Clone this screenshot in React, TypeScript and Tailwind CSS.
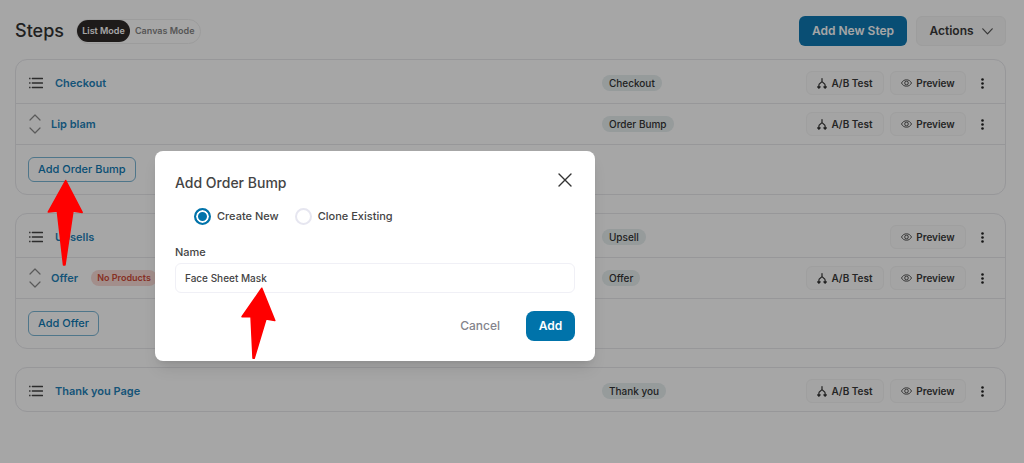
import React, { useState } from 'react';

interface Step {
  name: string;
  type: string;
  nested?: boolean;
  noProducts?: boolean;
  abTest?: boolean;
}

interface StepGroup {
  id: string;
  steps: Step[];
  addLabel?: string;
}

const GROUPS: StepGroup[] = [
  {
    id: 'checkout',
    steps: [
      { name: 'Checkout', type: 'Checkout', abTest: true },
      { name: 'Lip blam', type: 'Order Bump', nested: true, abTest: true },
    ],
    addLabel: 'Add Order Bump',
  },
  {
    id: 'upsells',
    steps: [
      { name: 'Upsells', type: 'Upsell' },
      { name: 'Offer', type: 'Offer', nested: true, noProducts: true, abTest: true },
    ],
    addLabel: 'Add Offer',
  },
  {
    id: 'thankyou',
    steps: [{ name: 'Thank you Page', type: 'Thank you', abTest: true }],
  },
];

const ListIcon = () => (
  <svg width="14" height="12" viewBox="0 0 14 12" fill="none" stroke="#444" strokeWidth="1.3">
    <path d="M3.3 1.5H13.5M3.3 6H13.5M3.3 10.5H13.5" strokeLinecap="round" />
    <path d="M0.1 1.5H1.5M0.1 6H1.5M0.1 10.5H1.5" strokeWidth="1.4" />
  </svg>
);

const SortIcon = () => (
  <svg width="12" height="20" viewBox="0 0 12 20" fill="none" stroke="#8a8a8a" strokeWidth="1.2" strokeLinecap="round" strokeLinejoin="round">
    <path d="M1 6L6 1L11 6M1 14L6 19L11 14" />
  </svg>
);

const SplitIcon = () => (
  <svg width="10" height="11" viewBox="0 0 10 11" fill="none" stroke="#333" strokeWidth="1.2" strokeLinecap="round" strokeLinejoin="round">
    <path d="M5 0.6V3.2M5 3.2C4.8 5 1.9 5 1.9 7V9.8M5 3.2C5.2 5 8.1 5 8.1 7V9.8" />
    <path d="M0.6 8.9L1.9 10.2L3.2 8.9ZM6.8 8.9L8.1 10.2L9.4 8.9Z" fill="#333" />
  </svg>
);

const EyeIcon = () => (
  <svg width="11" height="8" viewBox="0 0 11 8" fill="none" stroke="#444" strokeWidth="0.9">
    <path d="M0.5 4C1.6 1.8 3.4 0.8 5.5 0.8S9.4 1.8 10.5 4C9.4 6.2 7.6 7.2 5.5 7.2S1.6 6.2 0.5 4Z" />
    <circle cx="5.5" cy="4" r="1.8" />
  </svg>
);

const DotsIcon = () => (
  <svg width="3" height="11" viewBox="0 0 3 11" fill="#222">
    <circle cx="1.5" cy="1.5" r="1.3" />
    <circle cx="1.5" cy="5.5" r="1.3" />
    <circle cx="1.5" cy="9.5" r="1.3" />
  </svg>
);

const RowButton: React.FC<{ icon: React.ReactNode; label: string; className: string }> = ({ icon, label, className }) => (
  <button className={`flex h-6 items-center justify-center gap-1 rounded-md border border-[#f4f4f4] bg-[#fcfcfc] text-[10px] font-semibold text-[#3a3a3a] ${className}`}>
    {icon}
    {label}
  </button>
);

const StepRow: React.FC<{ step: Step; divider: boolean }> = ({ step, divider }) => (
  <li className={`grid grid-cols-[59fr_41fr] items-center gap-1.5 pb-2 ${step.nested ? 'pt-2' : 'pt-[11px]'} ${divider ? 'border-b border-[#e8e8ec]' : ''}`}>
    <div className={`flex items-center pl-[13px] ${step.nested ? 'gap-2.5' : 'gap-3'}`}>
      {step.nested ? <SortIcon /> : <ListIcon />}
      <a href="#" className="text-[11px] font-semibold text-[#1f82b8]">{step.name}</a>
      {step.noProducts && (
        <span className="ml-[3px] h-4 rounded-full bg-[#f9dad6] px-1.5 text-[9px] leading-4 font-semibold text-[#cf4a37]">No Products</span>
      )}
    </div>
    <div className="flex items-center justify-between pr-[21px]">
      <span className="h-4 rounded-full bg-[#e6eeef] px-[7px] text-[10px] leading-4 font-medium text-[#333]">{step.type}</span>
      <div className="flex items-center gap-1.5">
        {step.abTest && <RowButton icon={<SplitIcon />} label="A/B Test" className="w-[78px]" />}
        <RowButton icon={<EyeIcon />} label="Preview" className="w-[76px]" />
        <button aria-label="More options" className="ml-[9px]">
          <DotsIcon />
        </button>
      </div>
    </div>
  </li>
);

const GroupCard: React.FC<{ group: StepGroup }> = ({ group }) => (
  <section className="rounded-xl border border-[#e8e8ec]">
    <ul>
      {group.steps.map((step, i) => (
        <StepRow key={step.name} step={step} divider={i < group.steps.length - 1 || !!group.addLabel} />
      ))}
    </ul>
    {group.addLabel && (
      <div className="flex px-3 py-3">
        <button className="h-[25px] rounded-md border border-[#7ab5d4] px-[9px] text-[11px] font-medium text-[#0e79b3]">
          {group.addLabel}
        </button>
      </div>
    )}
  </section>
);

const RADIO_CLASS =
  'size-[17px] appearance-none rounded-full border-2 border-[#e6e6f0] bg-white checked:border-[#0073aa] checked:bg-[#0073aa] checked:shadow-[inset_0_0_0_2px_white]';

const AddBumpDialog: React.FC = () => {
  const [mode, setMode] = useState<'new' | 'clone'>('new');
  const [name, setName] = useState('Face Sheet Mask');

  return (
    <div role="dialog" aria-labelledby="dialog-title" className="w-full max-w-[440px] rounded-lg bg-white px-5 pt-[22px] pb-5 shadow-lg">
      <div className="flex items-start justify-between">
        <h2 id="dialog-title" className="text-sm leading-5 font-medium text-[#444]">Add Order Bump</h2>
        <button aria-label="Close" className="mr-[3px]">
          <svg width="14" height="14" viewBox="0 0 14 14" fill="none" stroke="#333" strokeWidth="1.4" strokeLinecap="round">
            <path d="M1 1L13 13M13 1L1 13" />
          </svg>
        </button>
      </div>

      <div className="mt-[15px] flex items-center gap-4 pl-[19px] text-[11px] font-medium text-[#444]">
        <label className="flex items-center gap-1.5">
          <input type="radio" name="mode" checked={mode === 'new'} onChange={() => setMode('new')} className={RADIO_CLASS} />
          Create New
        </label>
        <label className="flex items-center gap-1.5">
          <input type="radio" name="mode" checked={mode === 'clone'} onChange={() => setMode('clone')} className={RADIO_CLASS} />
          Clone Existing
        </label>
      </div>

      <label htmlFor="bump-name" className="mt-[19px] block text-[11px] leading-4 font-medium text-[#444]">Name</label>
      <input
        id="bump-name"
        type="text"
        value={name}
        onChange={e => setName(e.target.value)}
        className="mt-[3px] block h-[30px] w-full rounded-md border border-[#f0f0f6] px-[9px] text-[10px] font-medium text-[#444] outline-none"
      />

      <div className="mt-[18px] flex items-center justify-end gap-[26px]">
        <button className="text-xs font-medium text-[#84848c]">Cancel</button>
        <button className="h-[30px] w-[49px] rounded-lg bg-[#0073aa] text-xs font-semibold text-white">Add</button>
      </div>
    </div>
  );
};

export default function App() {
  return (
    <div className="relative min-h-screen bg-white font-['Inter',sans-serif]">
      <main className="pt-4 pr-[18px] pb-8 pl-[15px]">
        <header className="mb-[13px] flex items-center justify-between">
          <div className="flex items-center gap-3">
            <h1 className="text-lg leading-6 font-medium text-[#333]">Steps</h1>
            <div className="flex h-[25px] items-center rounded-full border border-[#f0f0f0] text-[9px] font-semibold">
              <button className="h-[22px] w-[53px] rounded-full bg-[#2f2a29] text-white">List Mode</button>
              <button className="px-[5px] pr-1.5 text-[#858585]">Canvas Mode</button>
            </div>
          </div>
          <div className="flex gap-[9px]">
            <button className="h-[30px] w-[108px] rounded-md bg-[#0e79b3] text-xs font-semibold text-white">Add New Step</button>
            <button className="flex h-[30px] w-[90px] items-center justify-center gap-2 rounded-md border border-[#f2f2f2] bg-[#f7f7f7] text-xs font-semibold text-[#3a3a3a]">
              Actions
              <svg width="11" height="7" viewBox="0 0 11 7" fill="none" stroke="#555" strokeWidth="1.2" strokeLinecap="round" strokeLinejoin="round">
                <path d="M0.8 0.8L5.5 5.8L10.2 0.8" />
              </svg>
            </button>
          </div>
        </header>

        <div className="flex flex-col gap-[18px]">
          {GROUPS.map(group => <GroupCard key={group.id} group={group} />)}
        </div>
      </main>

      <div className="absolute inset-0 bg-black/35 pt-[151px] pr-4 pl-[155px]">
        <AddBumpDialog />
      </div>

      {/* Pointer arrows */}
      <svg className="absolute top-[179px] left-[47px]" width="37" height="88" viewBox="0 0 37 88" fill="#f00" stroke="#f00" strokeWidth="1.5" strokeLinejoin="round" aria-hidden="true">
        <path d="M18.7 1.5L35.2 33.4L26 32L18 86H16.5L10.3 32L1.2 33Z" />
      </svg>
      <svg className="absolute top-[287px] left-[241px]" width="36" height="73" viewBox="0 0 36 73" fill="#f00" stroke="#f00" strokeWidth="1.5" strokeLinejoin="round" aria-hidden="true">
        <path d="M20.8 1.2L33.8 33.6L25 32L13.2 71.2H12L10 29.5L1 29.8Z" />
      </svg>
    </div>
  );
}
